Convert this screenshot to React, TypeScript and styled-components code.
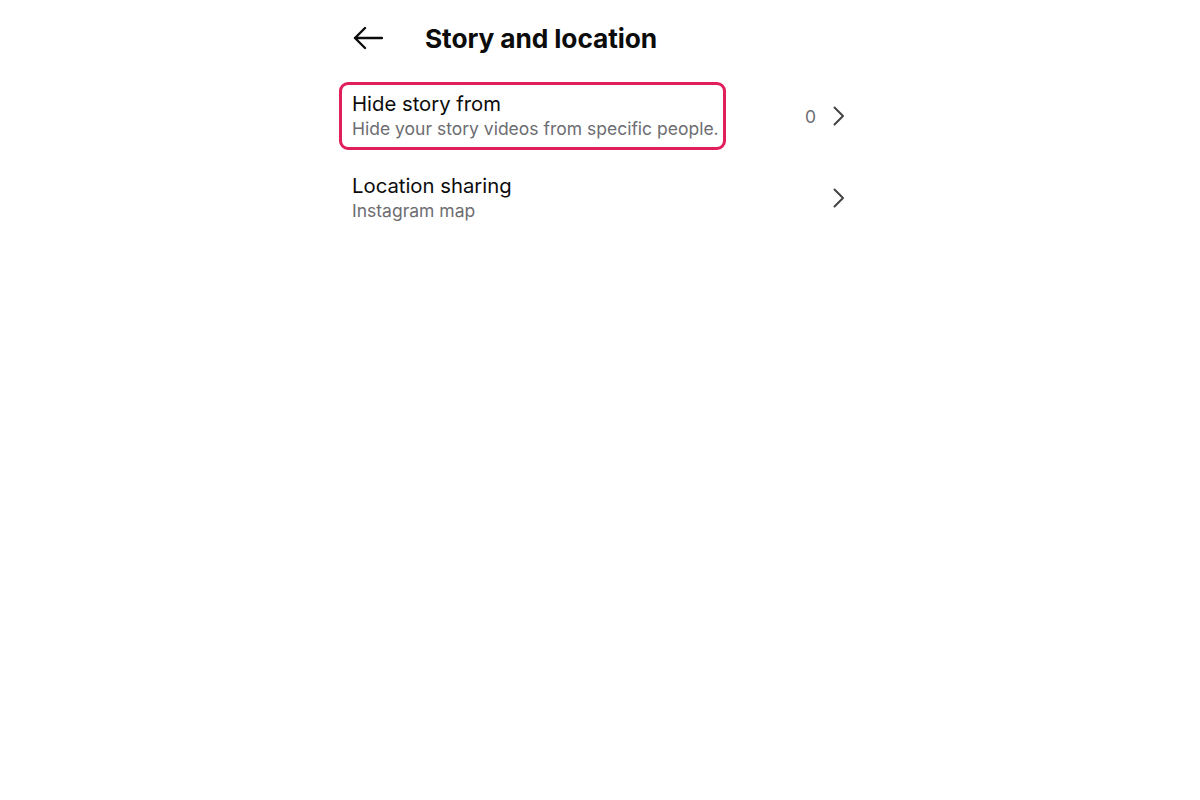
import React from "react";
import styled, { createGlobalStyle } from "styled-components";

const Global = createGlobalStyle`
  html, body { margin: 0; padding: 0; background: #ffffff; }
  body { font-family: Inter, "Noto Sans", "Liberation Sans", sans-serif; color: #0c0c0c; }
`;

const Page = styled.div`
  width: 522px;
  margin: 0 auto;
  display: flex;
  flex-direction: column;
`;

const Header = styled.header`
  display: flex;
  align-items: center;
  gap: 42px;
  height: 76px;
  padding-left: 14px;
`;

const BackButton = styled.button`
  border: none;
  background: none;
  padding: 0;
  width: 30px;
  height: 30px;
  display: flex;
  align-items: center;
  justify-content: center;
  color: #0c0c0c;
  cursor: pointer;
`;

const Title = styled.h1`
  margin: 0;
  font-size: 26.3px;
  font-weight: 700;
  letter-spacing: -0.1px;
`;

const List = styled.div`
  display: flex;
  flex-direction: column;
  gap: 14px;
  margin-top: 6px;
`;

const Row = styled.div`
  display: flex;
  align-items: center;
  justify-content: space-between;
`;

const TextBlock = styled.div<{ $highlight?: boolean }>`
  display: flex;
  flex-direction: column;
  padding: 6px 4px 6px 10px;
  border: 3px solid ${(p) => (p.$highlight ? "#e01f5c" : "transparent")};
  border-radius: 9px;
`;

const RowTitle = styled.div`
  font-size: 20.3px;
  line-height: 26px;
  color: #0c0c0c;
`;

const RowSub = styled.div`
  font-size: 17.5px;
  line-height: 24px;
  color: #6d6d72;
`;

const Trail = styled.div`
  display: flex;
  align-items: center;
  gap: 17px;
  padding-right: 16px;
`;

const Count = styled.span`
  font-size: 17.5px;
  color: #6d6d72;
`;

const Chevron = () => (
  <svg width="12" height="20" viewBox="0 0 12 20" fill="none">
    <path d="M1.5 1.5l8.5 8.5-8.5 8.5" stroke="#444446" strokeWidth="2" strokeLinecap="round" strokeLinejoin="round" />
  </svg>
);

const Arrow = () => (
  <svg width="30" height="24" viewBox="0 0 30 24" fill="none">
    <path d="M29 12H2M12 2L2 12l10 10" stroke="#0c0c0c" strokeWidth="2.4" strokeLinecap="round" strokeLinejoin="round" />
  </svg>
);

export default function App() {
  return (
    <>
      <Global />
      <Page>
        <Header>
          <BackButton aria-label="Back">
            <Arrow />
          </BackButton>
          <Title>Story and location</Title>
        </Header>
        <List>
          <Row>
            <TextBlock $highlight>
              <RowTitle>Hide story from</RowTitle>
              <RowSub>Hide your story videos from specific people.</RowSub>
            </TextBlock>
            <Trail>
              <Count>0</Count>
              <Chevron />
            </Trail>
          </Row>
          <Row>
            <TextBlock>
              <RowTitle>Location sharing</RowTitle>
              <RowSub>Instagram map</RowSub>
            </TextBlock>
            <Trail>
              <Chevron />
            </Trail>
          </Row>
        </List>
      </Page>
    </>
  );
}
